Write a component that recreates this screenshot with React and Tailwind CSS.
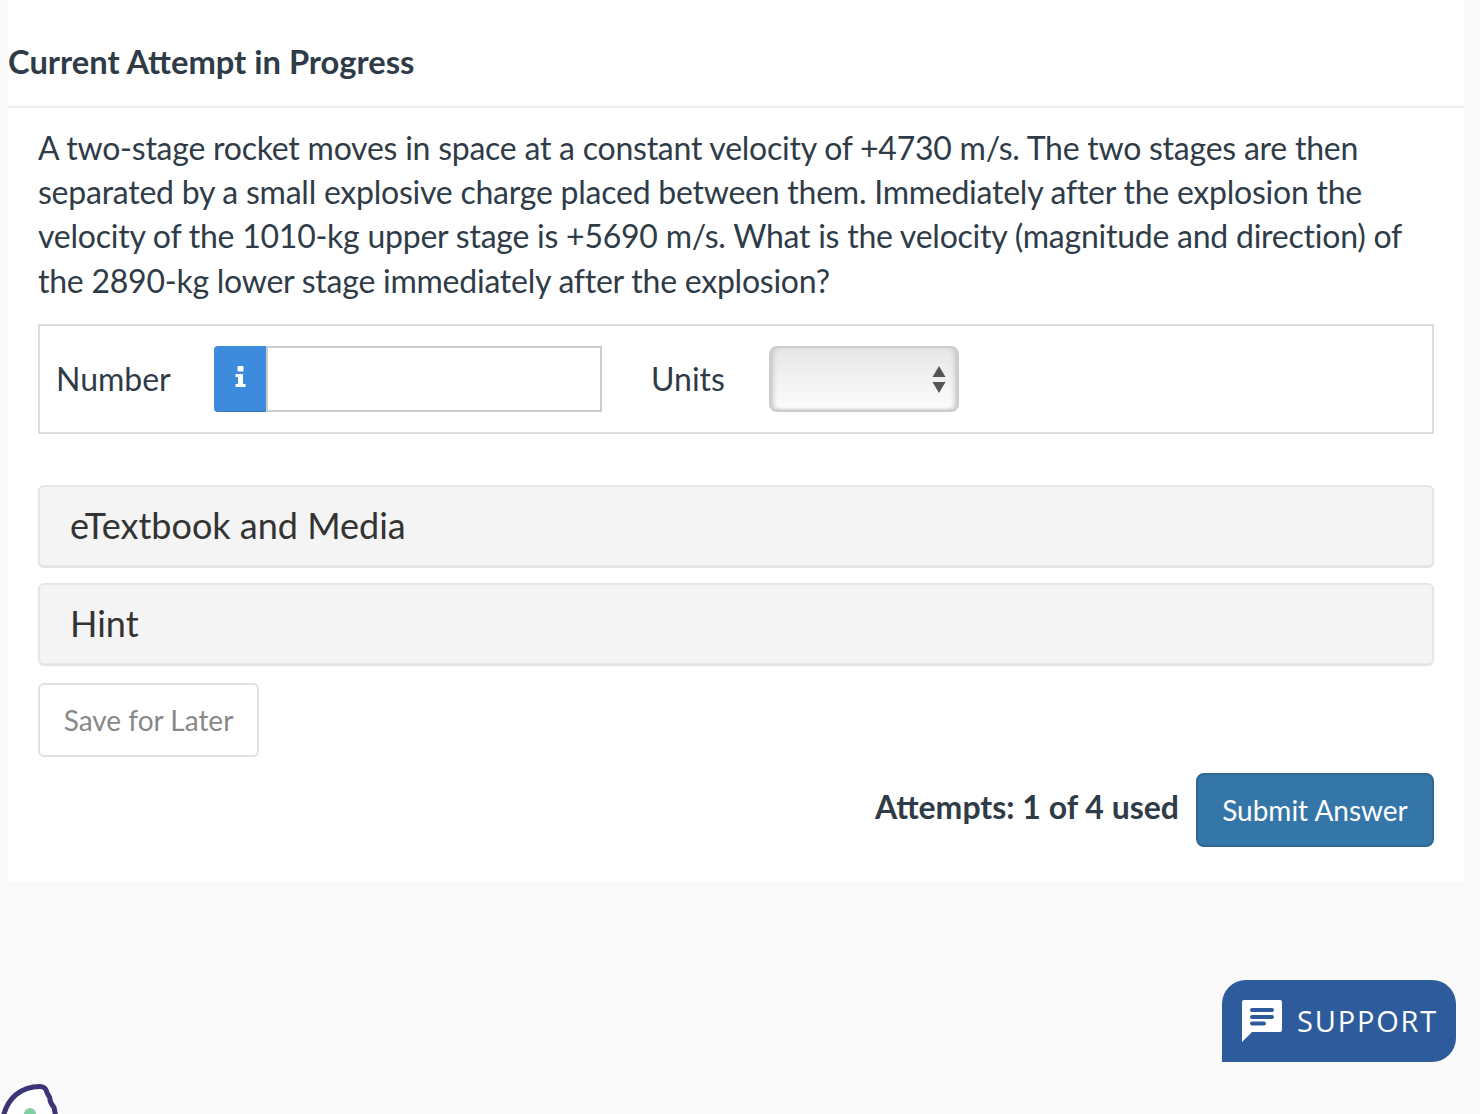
const LATO = "font-['Lato',sans-serif]"

function SupportButton() {
  return (
    <button
      type="button"
      className="absolute left-[1222px] top-[980px] flex h-[82px] w-[234px] items-center rounded-t-[24px] rounded-br-[24px] bg-[#2d5b9b] pl-[20px] font-['Open_Sans',sans-serif] text-[29px] tracking-[1.800px] text-white"
    >
      <svg width="40" height="42" viewBox="0 0 40 42" className="mr-[15px] shrink-0">
        <path d="M2 0h36a2 2 0 0 1 2 2v28a2 2 0 0 1-2 2H10L0 42V2a2 2 0 0 1 2-2z" fill="#fff" />
        <rect x="8" y="8" width="24" height="4" rx="2" fill="#2d5b9b" />
        <rect x="8" y="15" width="24" height="4" rx="2" fill="#2d5b9b" />
        <rect x="8" y="21.500" width="16" height="4" rx="2" fill="#2d5b9b" />
      </svg>
      SUPPORT
    </button>
  )
}

function CornerLogo() {
  return (
    <svg width="64" height="32" viewBox="0 0 64 32" className="absolute left-0 top-[1082px]">
      <path
        d="M3 36C7 16 21 4.500 40 4.500c5 0 6 3 7 6 1 3 3 4 3 7 0 3 2 5 4 8l2 10z"
        fill="#fff"
        stroke="#3b3476"
        strokeWidth="5"
      />
      <circle cx="30" cy="32" r="6" fill="#7fcfa3" />
    </svg>
  )
}

function Accordion({ title }) {
  return (
    <div className="flex h-[82px] items-center rounded-[6px] border-2 border-[#e6e6e6] bg-[#f4f4f4] pb-[2px] pl-[30px] text-[36px] text-[#333] shadow-[0_1px_1px_rgba(0,0,0,0.12)]">
      {title}
    </div>
  )
}

export default function App() {
  return (
    <div className={`relative h-[1114px] overflow-hidden bg-[#fafafa] ${LATO}`}>
      <div className="ml-[8px] h-[881px] w-[1456px] bg-white">
        <div className="flex h-[108px] items-end border-b-2 border-[#eeeeee] pb-[22px] text-[32.700px] font-bold leading-[44px] text-[#2f3c48]">
          Current Attempt in Progress
        </div>

        <div className="px-[30px] pt-[18px]">
          <p className="text-[32px] leading-[44.200px] tracking-[-0.240px] text-[#2f3c48]">
            A two-stage rocket moves in space at a constant velocity of +4730 m/s. The two stages are then separated by a
            small explosive charge placed between them. Immediately after the explosion the velocity of the 1010-kg upper
            stage is +5690 m/s. What is the velocity (magnitude and direction) of the 2890-kg lower stage immediately after
            the explosion?
          </p>

          <div className="mt-[21px] flex h-[110px] w-[1396px] items-center border-2 border-[#dddddd] pl-[16px] text-[32px] text-[#2f3c48]">
            <span className="w-[158px]">Number</span>
            <span className="flex h-[66px] w-[52px] items-center justify-center rounded-l-[4px] border-b border-[#3a78c0] bg-[#3d8bdd]">
              <svg width="11" height="21" viewBox="0 0 11 21" className="mb-[4px]">
                <rect x="2.500" y="0" width="6" height="5.500" rx="1" fill="#fff" />
                <path d="M0.500 8h7.500v10h2.500v3H0.500v-3H3v-7H0.500z" fill="#fff" />
              </svg>
            </span>
            <input
              type="text"
              aria-label="Number"
              className="h-[66px] w-[336px] border-2 border-[#cccccc] bg-white outline-none"
            />
            <span className="ml-[49px] w-[118px]">Units</span>
            <div className="relative h-[66px] w-[190px] rounded-[8px] border-2 border-[#cccccc] bg-gradient-to-b from-[#e6e6e6] to-[#fdfdfd] shadow-[inset_5px_0_5px_-3px_#c4c4c4,inset_-5px_0_5px_-3px_#c4c4c4,inset_0_-3px_3px_-2px_#d4d4d4]">
              <svg width="14" height="28" viewBox="0 0 14 28" className="absolute right-[11px] top-[18px]">
                <path d="M7 0l6.500 11H0.500z M0.500 16h13L7 27z" fill="#555" />
              </svg>
            </div>
          </div>

          <div className="mt-[51px] flex w-[1396px] flex-col gap-[16px]">
            <Accordion title="eTextbook and Media" />
            <Accordion title="Hint" />
          </div>

          <button
            type="button"
            className="mt-[18px] block h-[74px] w-[221px] rounded-[6px] border-2 border-[#e0e0e0] bg-white text-[28px] text-[#888888]"
          >
            Save for Later
          </button>

          <div className="mt-[16px] flex w-[1396px] items-center justify-end gap-[17px]">
            <span className="mb-[5px] text-[32px] font-bold text-[#2f3c48]">Attempts: 1 of 4 used</span>
            <button
              type="button"
              className="h-[74px] w-[238px] rounded-[8px] border-2 border-[#2e6790] bg-[#3476a8] text-[28px] text-white"
            >
              Submit Answer
            </button>
          </div>
        </div>
      </div>

      <SupportButton />
      <CornerLogo />
    </div>
  )
}
